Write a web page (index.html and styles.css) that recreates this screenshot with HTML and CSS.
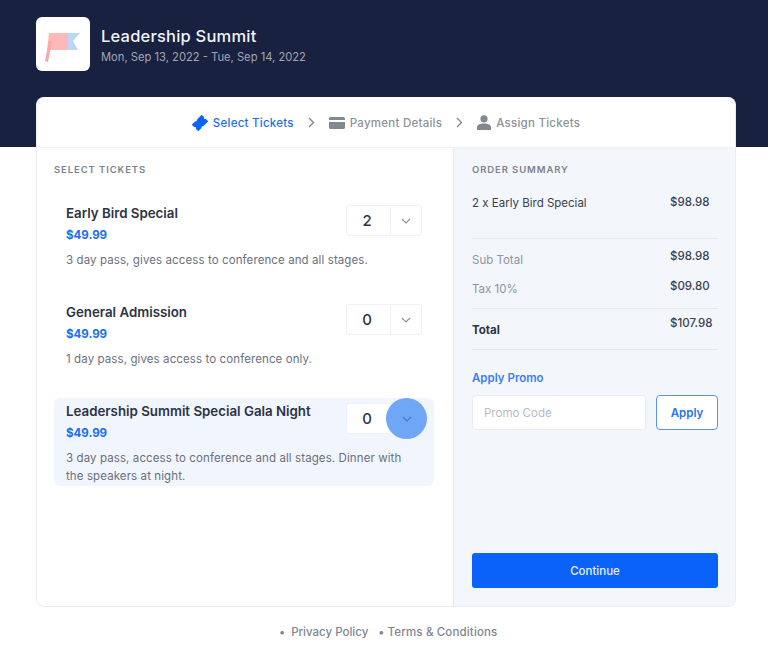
FILE: index.html
```html
<!DOCTYPE html>
<html lang="en">
<head>
  <meta charset="UTF-8" />
  <meta name="viewport" content="width=device-width, initial-scale=1.0" />
  <title>Leadership Summit - Select Tickets</title>
  <link rel="stylesheet" href="styles.css">
</head>
<body>
  <header class="hero">
    <div class="logo">
      <svg width="36" height="32" viewBox="0 0 36 32">
        <polygon points="20,1 35,1 28,9 33,18 20,18" fill="#bcd6fb" />
        <polygon points="4,1 23,1 23,18 2,18" fill="#fdb9b5" />
        <polygon points="4,9 7,9 3,30 0,29" fill="#fba7a2" />
      </svg>
    </div>
    <div class="event">
      <h1>Leadership Summit</h1>
      <p class="dates">Mon, Sep 13, 2022 - Tue, Sep 14, 2022</p>
    </div>
  </header>

  <main class="card">
    <nav class="steps">
      <span class="step active">
        <svg width="16" height="16" viewBox="0 0 16 16">
          <path transform="rotate(-45 8 8)" d="M1 3.4 H5.9 A0.9 0.9 0 0 0 7.7 3.4 H15 V7 A1 1 0 0 0 15 9 V12.6 H7.7 A0.9 0.9 0 0 0 5.9 12.6 H1 V9 A1 1 0 0 0 1 7 Z" fill="#0b63f6" />
        </svg>
        Select Tickets
      </span>
      <svg class="chev" width="7" height="11" viewBox="0 0 7 11"><path d="M1 1 L5.5 5.5 L1 10" /></svg>
      <span class="step">
        <svg width="16" height="12" viewBox="0 0 16 12">
          <path d="M1.5 0 H14.5 A1.5 1.5 0 0 1 16 1.5 V3 H0 V1.5 A1.5 1.5 0 0 1 1.5 0 Z M0 5 H16 V10.5 A1.5 1.5 0 0 1 14.5 12 H1.5 A1.5 1.5 0 0 1 0 10.5 Z" fill="#83888f" />
        </svg>
        Payment Details
      </span>
      <svg class="chev" width="7" height="11" viewBox="0 0 7 11"><path d="M1 1 L5.5 5.5 L1 10" /></svg>
      <span class="step">
        <svg width="14" height="15" viewBox="0 0 14 15">
          <circle cx="7" cy="3.8" r="3.6" fill="#83888f" />
          <path d="M0 15 V12.5 C0 9.8 3 8.5 7 8.5 C11 8.5 14 9.8 14 12.5 V15 Z" fill="#83888f" />
        </svg>
        Assign Tickets
      </span>
    </nav>

    <div class="columns">
      <section class="tickets">
        <h2>SELECT TICKETS</h2>

        <div class="ticket">
          <div class="ticket-top">
            <div>
              <h3>Early Bird Special</h3>
              <div class="price">$49.99</div>
            </div>
            <div class="qty">
              <span class="qty-num">2</span>
              <span class="qty-arrow"><svg width="10" height="6" viewBox="0 0 10 6"><path d="M1 1 L5 5 L9 1" /></svg></span>
            </div>
          </div>
          <p>3 day pass, gives access to conference and all stages.</p>
        </div>

        <div class="ticket">
          <div class="ticket-top">
            <div>
              <h3>General Admission</h3>
              <div class="price">$49.99</div>
            </div>
            <div class="qty">
              <span class="qty-num">0</span>
              <span class="qty-arrow"><svg width="10" height="6" viewBox="0 0 10 6"><path d="M1 1 L5 5 L9 1" /></svg></span>
            </div>
          </div>
          <p>1 day pass, gives access to conference only.</p>
        </div>

        <div class="ticket hovered">
          <div class="ticket-top">
            <div>
              <h3>Leadership Summit Special Gala Night</h3>
              <div class="price">$49.99</div>
            </div>
            <div class="qty">
              <span class="qty-num">0</span>
              <span class="qty-arrow"><svg width="10" height="6" viewBox="0 0 10 6"><path d="M1 1 L5 5 L9 1" /></svg></span>
              <span class="cursor"><svg width="10" height="6" viewBox="0 0 10 6"><path d="M1 1 L5 5 L9 1" /></svg></span>
            </div>
          </div>
          <p>3 day pass, access to conference and all stages. Dinner with the speakers at night.</p>
        </div>
      </section>

      <aside class="summary">
        <h2>ORDER SUMMARY</h2>
        <div class="row item">
          <span>2 x Early Bird Special</span>
          <span class="amount">$98.98</span>
        </div>
        <div class="totals">
          <div class="row sub">
            <span>Sub Total</span>
            <span class="amount">$98.98</span>
          </div>
          <div class="row tax">
            <span>Tax 10%</span>
            <span class="amount">$09.80</span>
          </div>
        </div>
        <div class="row grand">
          <span>Total</span>
          <span class="amount">$107.98</span>
        </div>

        <div class="promo-label">Apply Promo</div>
        <form class="promo">
          <input type="text" placeholder="Promo Code" />
          <button type="button">Apply</button>
        </form>

        <button type="button" class="continue">Continue</button>
      </aside>
    </div>
  </main>

  <footer class="links">
    <a href="#">Privacy Policy</a>
    <a href="#" class="terms">Terms &amp; Conditions</a>
  </footer>
</body>
</html>
```

FILE: styles.css
```css
body {
  font-family: Inter, 'Noto Sans', sans-serif;
  background-color: #fff;
  margin: 0;
  padding: 0;
  color: #2d3345;
}

h1, h2, h3, p {
  margin: 0;
}

.hero {
  display: flex;
  align-items: center;
  gap: 11px;
  height: 147px;
  box-sizing: border-box;
  padding: 17px 36px 76px;
  background-color: #18213f;
}

.logo {
  width: 54px;
  height: 54px;
  box-sizing: border-box;
  padding: 15px 8px 7px 9px;
  background-color: #fff;
  border-radius: 6px;
}

.event {
  padding-top: 2px;
}

.hero h1 {
  font-size: 16.5px;
  line-height: 22px;
  font-weight: 500;
  letter-spacing: 0.2px;
  color: #f2f3f6;
}

.dates {
  margin-top: 2px;
  font-size: 11.2px;
  line-height: 16px;
  color: #a2a6b3;
}

.card {
  width: 700px;
  box-sizing: border-box;
  margin: -50px 0 0 36px;
  background-color: #fff;
  border: 1px solid #e9edf3;
  border-top: 0;
  border-radius: 8px;
  overflow: hidden;
}

.steps {
  display: flex;
  align-items: center;
  justify-content: center;
  gap: 14px;
  height: 49px;
  padding-top: 1px;
  border-bottom: 1px solid #eef1f5;
}

.step {
  display: flex;
  align-items: center;
  gap: 5px;
  font-size: 11.5px;
  font-weight: 500;
  letter-spacing: 0.25px;
  color: #8d9299;
}

.step.active {
  color: #1a6ef5;
}

.chev path {
  fill: none;
  stroke: #80858c;
  stroke-width: 1.3;
}

.columns {
  display: flex;
  height: 458px;
}

.tickets {
  width: 416px;
  box-sizing: border-box;
  padding: 16px 19px 0 17px;
}

h2 {
  font-size: 9.5px;
  line-height: 12px;
  font-weight: 600;
  letter-spacing: 0.9px;
  color: #7d8290;
}

.tickets h2 {
  margin-bottom: 24px;
}

.ticket {
  padding: 3px 12px 1px;
  margin-bottom: 29px;
  border-radius: 6px;
}

.ticket.hovered {
  background-color: #f1f5fd;
}

.ticket-top {
  display: flex;
  justify-content: space-between;
}

h3 {
  font-size: 13.3px;
  line-height: 20px;
  font-weight: 600;
  color: #2d3345;
}

.price {
  margin-top: 3px;
  font-size: 11.5px;
  line-height: 18px;
  font-weight: 700;
  color: #1a6ef5;
}

.ticket p {
  margin-top: 7px;
  padding-right: 12px;
  font-size: 11.5px;
  line-height: 18px;
  letter-spacing: 0.1px;
  color: #6b7080;
}

.qty {
  position: relative;
  display: flex;
  height: 31px;
  margin: 2px 0 0 0;
  background-color: #fff;
  border: 1px solid #eef1f5;
  border-radius: 3px;
  box-sizing: border-box;
}

.qty-num {
  width: 40px;
  padding-right: 3px;
  text-align: center;
  font-size: 15px;
  line-height: 30px;
  font-weight: 500;
  color: #2d3345;
}

.qty-arrow {
  display: flex;
  align-items: center;
  justify-content: center;
  width: 30px;
  border-left: 1px solid #eef1f5;
}

.qty svg path {
  fill: none;
  stroke: #8d9299;
  stroke-width: 1.2;
}

.cursor {
  position: absolute;
  left: 39px;
  top: -6px;
  display: flex;
  align-items: center;
  justify-content: center;
  width: 41px;
  height: 41px;
  background-color: #6fa7f6;
  border-radius: 50%;
}

.qty .cursor svg path {
  stroke: #4a78bd;
}

.summary {
  display: flex;
  flex-direction: column;
  flex: 1;
  box-sizing: border-box;
  padding: 16px 17px 18px 18px;
  background-color: #f3f6fa;
  border-left: 1px solid #e6eaf0;
}

.row {
  display: grid;
  grid-template-columns: 1fr 48px;
  font-size: 11.5px;
  line-height: 16px;
}

.amount {
  color: #3a4052;
  font-weight: 500;
}

.item {
  margin-top: 18px;
  height: 44px;
  align-items: start;
  color: #3a4052;
}

.item span:first-child {
  padding-top: 1px;
}

.totals {
  padding: 9px 0 11px;
  border-top: 1px solid #e6eaf0;
  border-bottom: 1px solid #e6eaf0;
  color: #8f94a0;
}

.sub span:first-child {
  padding-top: 4px;
}

.tax {
  margin-top: 10px;
}

.tax span:first-child {
  padding-top: 3px;
}

.grand {
  padding: 6px 0 11px;
  height: 41px;
  box-sizing: border-box;
  border-bottom: 1px solid #e6eaf0;
  color: #2d3345;
}

.grand span:first-child {
  padding-top: 7px;
  font-weight: 700;
}

.promo-label {
  margin-top: 20px;
  font-size: 11.5px;
  line-height: 16px;
  font-weight: 600;
  color: #3d7ff0;
}

.promo {
  display: flex;
  gap: 10px;
  margin-top: 9px;
}

.promo input {
  width: 174px;
  height: 35px;
  box-sizing: border-box;
  padding: 0 11px;
  background-color: #fff;
  border: 1px solid #e9edf3;
  border-radius: 4px;
  font-family: inherit;
  font-size: 11.5px;
}

.promo input::placeholder {
  color: #b7bbc4;
}

.promo button {
  width: 62px;
  height: 35px;
  padding: 0;
  background-color: #fff;
  border: 1px solid #5c92ee;
  border-radius: 4px;
  font-family: inherit;
  font-size: 11.5px;
  font-weight: 600;
  color: #2b74ef;
}

.continue {
  height: 35px;
  margin-top: auto;
  background-color: #0a62fb;
  color: #e8effd;
  border: none;
  border-radius: 3px;
  font-family: inherit;
  font-size: 11.5px;
  font-weight: 500;
}

.links {
  display: flex;
  gap: 10px;
  margin: 17px 0 0 279px;
  font-size: 11.5px;
  line-height: 16px;
}

.links a {
  color: #7f8593;
  font-weight: 500;
  text-decoration: none;
}

.links a::before {
  content: "\2022";
  margin-right: 6px;
}

.links .terms {
  letter-spacing: 0.15px;
}

.links .terms::before {
  margin-right: 3px;
}
```
